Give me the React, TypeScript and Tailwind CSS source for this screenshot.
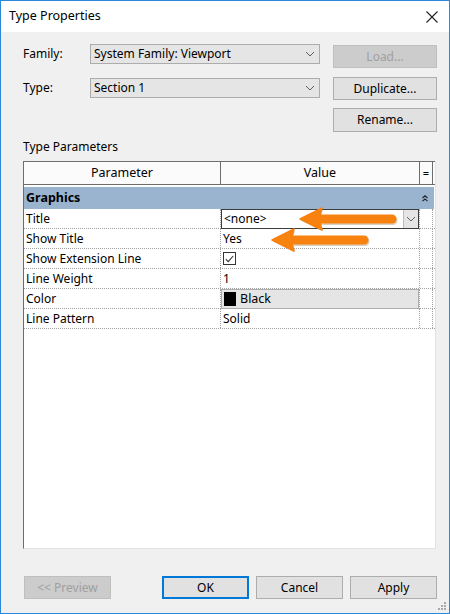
import React from "react";

const font = { fontFamily: '"Noto Sans", "Open Sans", Arial, sans-serif' };

function Chevron() {
  return (
    <svg width="10" height="6" viewBox="0 0 10 6" fill="none">
      <path d="M1 1l4 4 4-4" stroke="#606060" strokeWidth="1" />
    </svg>
  );
}

function Combo({ text }: { text: string }) {
  return (
    <div className="flex h-[20px] w-[230px] items-center justify-between border border-[#acacac] bg-[#e5e5e5] pl-[3px] pr-[4px] text-[12px] text-black">
      <span>{text}</span>
      <Chevron />
    </div>
  );
}

function Btn({
  label,
  disabled = false,
  focused = false,
  className = "",
}: {
  label: string;
  disabled?: boolean;
  focused?: boolean;
  className?: string;
}) {
  const look = disabled
    ? "border-[#bfbfbf] bg-[#cccccc] text-[#a0a0a0]"
    : focused
      ? "border-[#0078d7] bg-[#e1e1e1] text-black"
      : "border-[#adadad] bg-[#e1e1e1] text-black";
  return (
    <div
      className={`flex items-center justify-center border text-[12px] ${look} ${className}`}
    >
      {label}
    </div>
  );
}

function Arrow({ className }: { className: string }) {
  // orange callout arrow pointing left
  return (
    <svg className={className} viewBox="0 0 100 24" fill="none">
      <path d="M22 12H94" stroke="#6b3a00" strokeOpacity="0.25" strokeWidth="9" strokeLinecap="round" transform="translate(1 1.5)" />
      <path d="M2 12L24 1L21 12L24 23Z" fill="#6b3a00" fillOpacity="0.25" transform="translate(1 1.5)" />
      <path d="M20 12H94" stroke="#f7820f" strokeWidth="9" strokeLinecap="round" />
      <path d="M2 12L24 1L21 12L24 23Z" fill="#f7820f" stroke="#f7820f" strokeWidth="1.5" strokeLinejoin="round" />
    </svg>
  );
}

const rowLine = "border-b border-dotted border-[#a0a0a0]";

function Row({
  name,
  children,
}: {
  name: string;
  children?: React.ReactNode;
}) {
  return (
    <div className={`grid h-[20px] grid-cols-[197px_199px_13px] ${rowLine}`}>
      <div className="flex items-center border-r border-dotted border-[#a0a0a0] pl-[2px] text-[12px]">
        {name}
      </div>
      <div className="flex items-center border-r border-dotted border-[#a0a0a0] text-[12px]">
        {children}
      </div>
      <div className="border-r border-dotted border-[#a0a0a0]" />
    </div>
  );
}

export default function App() {
  return (
    <div
      className="relative flex h-[614px] w-[450px] flex-col border border-[#2b88d8] bg-[#f0f0f0] text-black"
      style={font}
    >
      {/* title bar */}
      <div className="flex h-[31px] items-center justify-between bg-white pl-[8px] pr-[11px]">
        <span className="text-[12.5px]">Type Properties</span>
        <svg width="12" height="12" viewBox="0 0 12 12">
          <path d="M0.5 0.5l11 11M11.5 0.5l-11 11" stroke="#222" strokeWidth="1.1" />
        </svg>
      </div>

      <div className="flex flex-col pl-[22px]">
        {/* family */}
        <div className="mt-[12px] flex">
          <div className="flex h-[20px] w-[67px] items-center text-[12px]">Family:</div>
          <Combo text="System Family: Viewport" />
          <Btn label="Load..." disabled className="ml-[13px] mt-[1px] h-[23px] w-[104px]" />
        </div>
        {/* type */}
        <div className="mt-[9px] flex">
          <div className="mt-[1px] flex h-[20px] w-[67px] items-center text-[12px]">Type:</div>
          <div className="mt-[1px]">
            <Combo text="Section 1" />
          </div>
          <Btn label="Duplicate..." className="ml-[13px] h-[23px] w-[104px]" />
        </div>
        <div className="mt-[8px] flex">
          <Btn label="Rename..." className="ml-[310px] h-[24px] w-[104px]" />
        </div>

        <div className="mt-[7px] h-[16px] text-[12px] leading-[16px]">Type Parameters</div>

        {/* table */}
        <div className="mt-[6px] flex h-[388px] w-[413px] flex-col border-l border-[#6d6d6d] border-b border-b-[#e3e3e3] border-r border-r-[#e3e3e3] bg-white">
          <div className="grid h-[24px] grid-cols-[197px_199px_13px] border-y border-[#6d6d6d] bg-[#fbfbfb] text-[12.5px]">
            <div className="flex items-center justify-center border-r border-[#6d6d6d]">Parameter</div>
            <div className="flex items-center justify-center border-r border-[#6d6d6d]">Value</div>
            <div className="flex items-center justify-center border-r border-[#6d6d6d] text-[11px]">=</div>
          </div>
          <div className="mt-[2px] flex h-[22px] w-[410px] items-center justify-between bg-[#9ab4d0] pl-[2px] pr-[6px]">
            <span className="text-[12.5px] font-bold">Graphics</span>
            <svg width="6" height="7" viewBox="0 0 6 7" fill="none">
              <path d="M0.5 3L3 0.8 5.5 3M0.5 6.2L3 4 5.5 6.2" stroke="#222" strokeWidth="1.1" />
            </svg>
          </div>
          <Row name="Title">
            <div className="flex h-[20px] w-[200px] items-center justify-between border border-[#3c3c3c] bg-white pl-[2px]">
              <span>&lt;none&gt;</span>
              <div className="flex h-[18px] w-[15px] items-center justify-center border-l border-[#bdbdbd] bg-[#e5e5e5]">
                <Chevron />
              </div>
            </div>
          </Row>
          <Row name="Show Title">
            <span className="pl-[2px]">Yes</span>
          </Row>
          <Row name="Show Extension Line">
            <div className="ml-[2px] flex h-[13px] w-[13px] items-center justify-center border border-[#333]">
              <svg width="9" height="8" viewBox="0 0 9 8" fill="none">
                <path d="M0.8 4.2l2.4 2.4L8.2 1" stroke="#333" strokeWidth="1.1" />
              </svg>
            </div>
          </Row>
          <Row name="Line Weight">
            <span className="pl-[2px]">1</span>
          </Row>
          <Row name="Color">
            <div className="flex h-[20px] w-[200px] items-center border border-[#adadad] bg-[#e5e5e5] pl-[2px]">
              <div className="h-[14px] w-[12px] bg-black" />
              <span className="ml-[4px] text-[12.5px]">Black</span>
            </div>
          </Row>
          <Row name="Line Pattern">
            <span className="pl-[2px]">Solid</span>
          </Row>
        </div>

        {/* bottom buttons */}
        <div className="mt-[27px] flex">
          <Btn label="<< Preview" disabled className="ml-[1px] h-[23px] w-[87px]" />
          <Btn label="OK" focused className="ml-[51px] h-[23px] w-[87px] border-2" />
          <Btn label="Cancel" className="ml-[7px] h-[23px] w-[87px]" />
          <Btn label="Apply" className="ml-[7px] h-[23px] w-[87px]" />
        </div>
      </div>

      {/* size grip */}
      <svg className="absolute bottom-[2px] right-[2px]" width="10" height="10" viewBox="0 0 10 10">
        <rect x="7" y="1" width="2" height="2" fill="#a8a8a8" />
        <rect x="4" y="4" width="2" height="2" fill="#a8a8a8" />
        <rect x="7" y="4" width="2" height="2" fill="#a8a8a8" />
        <rect x="1" y="7" width="2" height="2" fill="#a8a8a8" />
        <rect x="4" y="7" width="2" height="2" fill="#a8a8a8" />
        <rect x="7" y="7" width="2" height="2" fill="#a8a8a8" />
      </svg>

      {/* callout arrows */}
      <Arrow className="absolute left-[297px] top-[206px] h-[24px] w-[100px]" />
      <Arrow className="absolute left-[269px] top-[227px] h-[24px] w-[100px]" />
    </div>
  );
}
